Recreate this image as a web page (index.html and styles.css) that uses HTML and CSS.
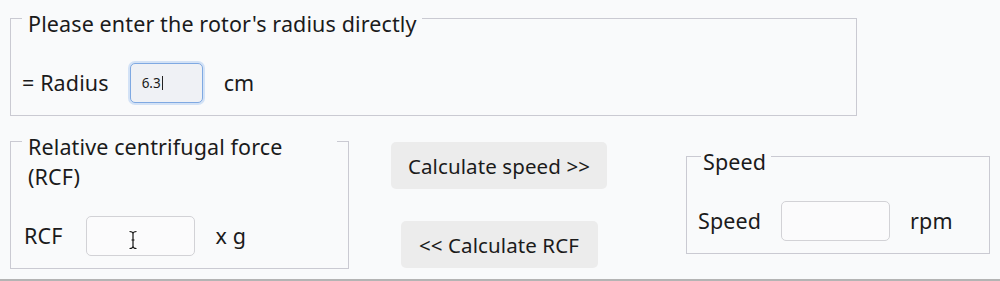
FILE: index.html
```html
<!DOCTYPE html>
<html lang="en">
<head>
<meta charset="utf-8">
<title>Centrifuge RCF calculator</title>
<link rel="stylesheet" href="styles.css">
</head>
<body>
<div class="app">
  <section class="group group-radius">
    <div class="group-title">Please enter the rotor's radius directly</div>
    <div class="row row-radius">
      <span class="label">= Radius</span>
      <div class="field field-focus field-radius"><span class="value">6.3</span><span class="caret"></span></div>
      <span class="unit">cm</span>
    </div>
  </section>

  <div class="bottom">
    <section class="group group-rcf">
      <div class="group-title">Relative centrifugal force (RCF)</div>
      <div class="row row-rcf">
        <span class="label">RCF</span>
        <div class="field field-rcf">
          <svg class="ibeam" width="10" height="20" viewBox="0 0 10 20"><path d="M1.5 1.5 Q5 1.5 5 4 Q5 1.5 8.5 1.5 M5 4 V16 M1.5 18.5 Q5 18.5 5 16 Q5 18.5 8.5 18.5 M3.5 10 H6.5" fill="none" stroke="#fff" stroke-width="3" stroke-linecap="round"/><path d="M1.5 1.5 Q5 1.5 5 4 Q5 1.5 8.5 1.5 M5 4 V16 M1.5 18.5 Q5 18.5 5 16 Q5 18.5 8.5 18.5 M3.5 10 H6.5" fill="none" stroke="#111" stroke-width="1.2"/></svg>
        </div>
        <span class="unit">x g</span>
      </div>
    </section>

    <div class="actions">
      <button class="btn btn-speed" type="button">Calculate speed &gt;&gt;</button>
      <button class="btn btn-rcf" type="button">&lt;&lt; Calculate RCF</button>
    </div>

    <section class="group group-speed">
      <div class="group-title">Speed</div>
      <div class="row">
        <span class="label">Speed</span>
        <div class="field field-speed"></div>
        <span class="unit">rpm</span>
      </div>
    </section>
  </div>
</div>
</body>
</html>
```

FILE: styles.css
```css
* { box-sizing: border-box; }

html, body {
  margin: 0;
  padding: 0;
  background: #f9fafb;
}

body {
  font-family: "Noto Sans", "Open Sans", sans-serif;
  font-size: 21.5px;
  letter-spacing: 0.12px;
  color: #1b1b1b;
  width: 1000px;
  height: 281px;
  overflow: hidden;
}

.app {
  height: 281px;
  border-bottom: 2px solid #b4b4b4;
  padding: 18px 0 0 10px;
}

.group {
  border: 1px solid #cacad2;
  padding: 0 11px 12px 11px;
}

.group-title {
  width: fit-content;
  margin-top: -10px;
  padding: 0 5px 0 6px;
  line-height: 30px;
  background: #f9fafb;
}

.row {
  display: flex;
  align-items: center;
  gap: 20px;
  margin-top: 24px;
  height: 40px;
}

.row-radius { gap: 21px; }
.row-rcf { padding-left: 2px; }
.row-rcf .label { margin-right: 4px; }

.label, .unit { line-height: 24px; }

.field {
  position: relative;
  height: 40px;
  border: 1px solid #d2d2d6;
  border-radius: 5px;
  background: #fbfbfc;
}

.field-focus {
  border-color: #7fa9e2;
  background: #eff1f5;
  box-shadow: 0 0 0 2px #d3e2f6;
  display: flex;
  align-items: center;
  padding-left: 11px;
  font-size: 13.5px;
  letter-spacing: 0;
}

.caret {
  width: 1px;
  height: 14px;
  background: #222;
  margin-left: 1px;
}

.group-radius { width: 847px; }
.field-radius { width: 73px; }

.bottom {
  display: flex;
  align-items: flex-start;
  margin-top: 25px;
}

.group-rcf { width: 339px; }
.field-rcf { width: 109px; }

.ibeam {
  position: absolute;
  left: 41px;
  top: 13px;
}

.actions {
  display: flex;
  flex-direction: column;
  align-items: center;
  gap: 32px;
  width: 216px;
  margin: 1px 0 0 42px;
}

.btn {
  font: inherit;
  font-size: 20.5px;
  letter-spacing: 0.1px;
  color: #1b1b1b;
  height: 47px;
  border: none;
  border-radius: 5px;
  background: #ececec;
  padding: 0 10px;
  white-space: nowrap;
}

.btn-speed { width: 216px; }
.btn-rcf { width: 197px; }

.group-speed {
  width: 304px;
  margin: 15px 0 0 79px;
}

.group-speed .group-title { margin-left: 3px; padding: 0 5px 0 2px; }
.field-speed { width: 109px; }
```
